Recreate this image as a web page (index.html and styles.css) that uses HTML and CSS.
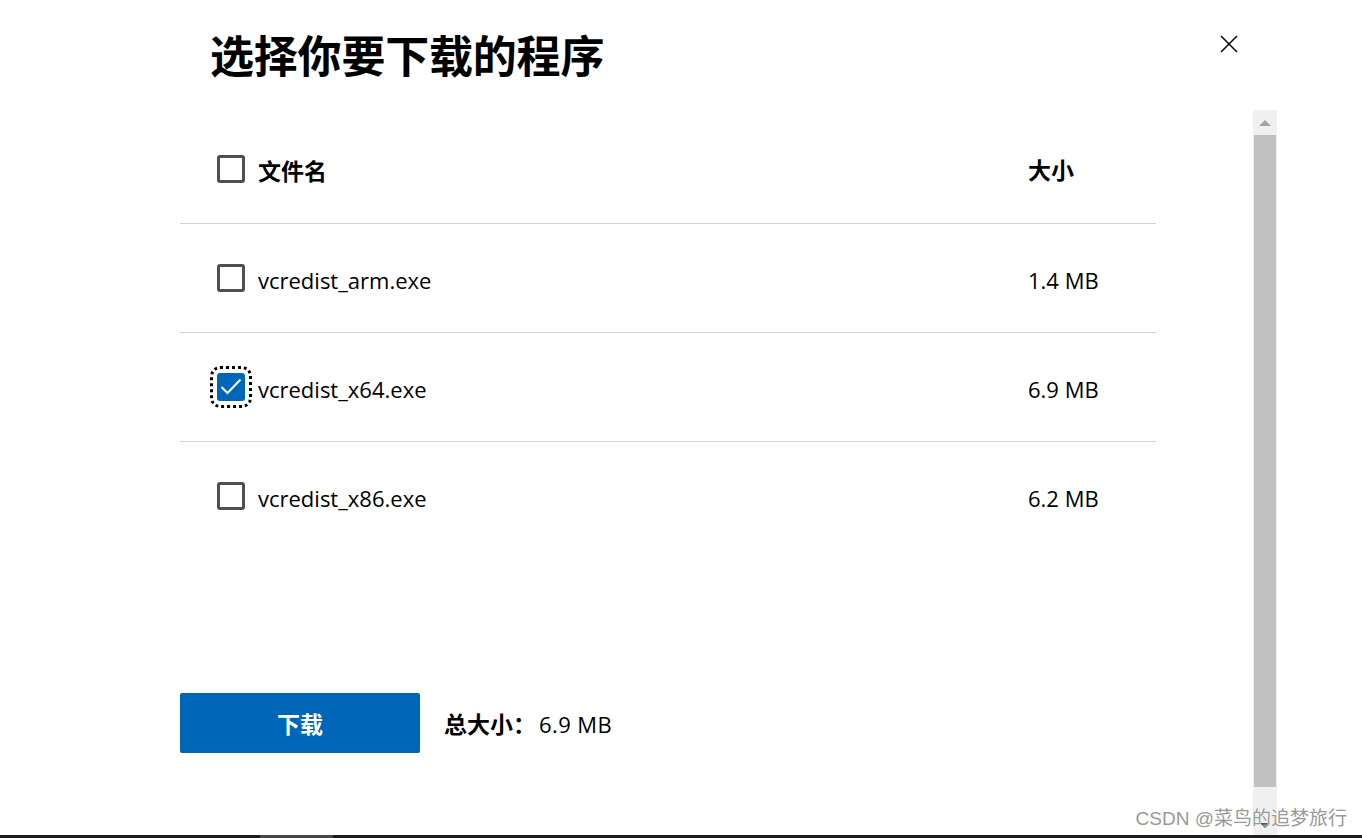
FILE: index.html
```html
<!DOCTYPE html>
<html lang="zh-CN">
<head>
<meta charset="utf-8">
<title>选择你要下载的程序</title>
<link rel="stylesheet" href="styles.css">
</head>
<body>
<div class="page">
  <div class="top">
    <h1 class="title">选择你要下载的程序</h1>
    <button class="close" aria-label="关闭">
      <svg width="18" height="18" viewBox="0 0 18 18"><path d="M1 1 L17 17 M17 1 L1 17" stroke="#000" stroke-width="1.5" fill="none"/></svg>
    </button>
  </div>
  <div class="scroll-area">
    <div class="content">
      <div class="table">
        <div class="row head">
          <div class="cell name"><span class="box"></span><span class="label">文件名</span></div>
          <div class="cell size">大小</div>
        </div>
        <div class="row">
          <div class="cell name"><span class="box"></span><span class="txt">vcredist_arm.exe</span></div>
          <div class="cell size"><span class="txt">1.4 MB</span></div>
        </div>
        <div class="row">
          <div class="cell name"><span class="box checked focus"><svg width="28" height="28" viewBox="0 0 28 28"><path d="M4.5 14 L10.5 20 L23.5 6.5" stroke="#fff" stroke-width="2" fill="none"/></svg></span><span class="txt">vcredist_x64.exe</span></div>
          <div class="cell size"><span class="txt">6.9 MB</span></div>
        </div>
        <div class="row last">
          <div class="cell name"><span class="box"></span><span class="txt">vcredist_x86.exe</span></div>
          <div class="cell size"><span class="txt">6.2 MB</span></div>
        </div>
      </div>
      <div class="footer">
        <button class="download">下载</button>
        <div class="total"><b>总大小：</b><span class="num">6.9 MB</span></div>
      </div>
    </div>
    <div class="scrollbar">
      <div class="sb-btn up"><span class="tri-up"></span></div>
      <div class="sb-thumb"></div>
      <div class="sb-track"></div>
      <div class="sb-btn down"><span class="tri-down"></span></div>
    </div>
  </div>
  <div class="taskbar"><span class="task-seg"></span></div>
  <div class="watermark">CSDN @菜鸟的追梦旅行</div>
</div>
</body>
</html>
```
FILE: styles.css
```css
html, body {
  margin: 0;
  padding: 0;
  background: #fff;
}
body {
  font-family: "Open Sans", "Noto Sans CJK SC", sans-serif;
  color: #000;
}
.page {
  position: relative;
  width: 1362px;
  height: 838px;
  display: flex;
  flex-direction: column;
  overflow: hidden;
}
.top {
  height: 110px;
  display: flex;
  justify-content: space-between;
  align-items: flex-start;
  padding: 0 124px 0 210px;
  box-sizing: border-box;
}
.title {
  margin: 24px 0 0 0;
  font-family: "Noto Sans CJK SC", sans-serif;
  font-weight: 700;
  font-size: 44px;
  line-height: 60px;
  letter-spacing: -0.2px;
}
.close {
  margin-top: 35px;
  padding: 0;
  border: 0;
  background: none;
  width: 18px;
  height: 18px;
  display: block;
}
.close svg { display: block; }
.scroll-area {
  flex: 1;
  display: flex;
  min-height: 0;
}
.content {
  margin-left: 180px;
  width: 976px;
  display: flex;
  flex-direction: column;
}
.table {
  margin-top: 5px;
}
.row {
  display: grid;
  grid-template-columns: 1fr 128px;
  height: 108px;
  align-items: center;
  border-bottom: 1px solid #d2d2d2;
  font-size: 22px;
}
.row.last { border-bottom: 0; }
.row.head {
  font-family: "Noto Sans CJK SC", sans-serif;
  font-weight: 700;
  font-size: 23px;
}
.txt {
  position: relative;
  top: 2px;
}
.cell.name {
  display: flex;
  align-items: center;
  padding-left: 37px;
}
.box {
  width: 28px;
  height: 28px;
  box-sizing: border-box;
  border: 3px solid #4f4f4f;
  border-radius: 3px;
  margin-right: 13px;
  flex: none;
  display: block;
}
.box.checked {
  background: #0067b8;
  border-color: #0067b8;
  position: relative;
}
.box.checked svg {
  position: absolute;
  left: -3px;
  top: -3px;
}
.box.focus {
  outline: 3px dotted #000;
  outline-offset: 4px;
}
.row.head .label { margin-top: 2px; }
.footer {
  margin-top: 143px;
  display: flex;
  align-items: center;
}
.download {
  width: 240px;
  height: 60px;
  border: 0;
  border-radius: 2px;
  background: #0067b8;
  color: #fff;
  font-family: "Noto Sans CJK SC", sans-serif;
  font-weight: 700;
  font-size: 23px;
  padding: 0;
}
.total {
  margin-left: 24px;
  font-size: 22px;
}
.total b {
  font-family: "Noto Sans CJK SC", sans-serif;
  font-weight: 700;
  font-size: 23px;
}
.total .num {
  margin-left: 3px;
  letter-spacing: 0.4px;
}
.scrollbar {
  margin-left: 97px;
  width: 24px;
  background: #f0f0f0;
  display: flex;
  flex-direction: column;
}
.sb-btn {
  height: 25px;
  display: flex;
  align-items: center;
  justify-content: center;
  flex: none;
}
.tri-up {
  width: 0; height: 0;
  border-left: 6px solid transparent;
  border-right: 6px solid transparent;
  border-bottom: 6px solid #a3a3a3;
}
.tri-down {
  width: 0; height: 0;
  border-left: 5px solid transparent;
  border-right: 5px solid transparent;
  border-top: 5px solid #505050;
  margin-top: 6px;
}
.sb-thumb {
  height: 652px;
  margin: 0 1px;
  background: #c1c1c1;
  flex: none;
}
.sb-track { flex: 1; }
.taskbar {
  height: 3px;
  background: #1c1c1c;
  flex: none;
  display: flex;
}
.task-seg {
  margin-left: 260px;
  width: 73px;
  background: #474747;
}
.watermark {
  position: absolute;
  right: 15px;
  bottom: 8px;
  font-family: "Liberation Sans", "Noto Sans CJK SC", sans-serif;
  font-size: 19px;
  color: #999;
  text-shadow: 0 0 1px #fff;
  white-space: nowrap;
}
```
